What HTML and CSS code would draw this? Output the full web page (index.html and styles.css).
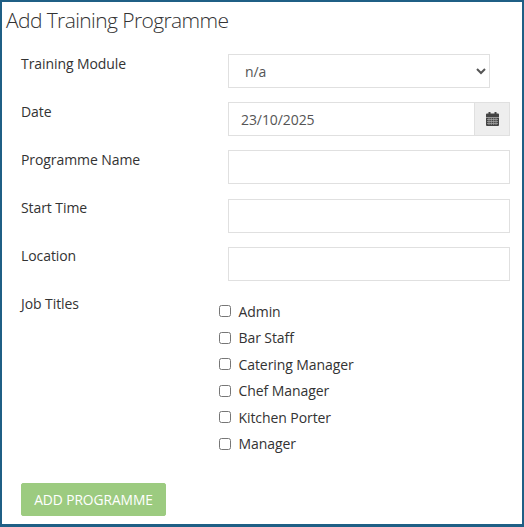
FILE: index.html
```html
<!DOCTYPE html>
<html lang="en">
    <head>
        <meta charset="UTF-8">
        <meta name="viewport" content="width=device-width, initial-scale=1.0">
        <title>Add Training Programme</title>
        <link rel="stylesheet" href="styles.css">
    </head>
    <body>
        <div class="panel">
            <h2 class="panel-title">Add Training Programme</h2>
            <form class="programme-form" name="programme">
                <div class="form-row">
                    <label class="row-label" for="module">Training Module</label>
                    <select class="form-control select-control" id="module">
                        <option>n/a</option>
                    </select>
                </div>
                <div class="form-row">
                    <label class="row-label" for="date">Date</label>
                    <div class="input-group">
                        <input class="form-control group-input" id="date" type="text" value="23/10/2025">
                        <span class="input-addon">
                            <svg class="calendar-icon" viewBox="0 0 13 14" width="13" height="14">
                                <path fill="#444" d="M2.5 0h2v1.5h4V0h2v1.5H12a1 1 0 0 1 1 1V5H0V2.500a1 1 0 0 1 1-1h1.500z"/>
                                <path fill="#444" d="M0 5.500h13V13a1 1 0 0 1-1 1H1a1 1 0 0 1-1-1z"/>
                                <path stroke="#aaa" stroke-width=".7" fill="none" d="M1 7.500h11M1 9.500h11M1 11.500h11M3 6v7M5.300 6v7M7.700 6v7M10 6v7"/>
                            </svg>
                        </span>
                    </div>
                </div>
                <div class="form-row">
                    <label class="row-label" for="name">Programme Name</label>
                    <input class="form-control" id="name" type="text">
                </div>
                <div class="form-row">
                    <label class="row-label" for="start">Start Time</label>
                    <input class="form-control" id="start" type="text">
                </div>
                <div class="form-row">
                    <label class="row-label" for="location">Location</label>
                    <input class="form-control" id="location" type="text">
                </div>
                <div class="form-row">
                    <span class="row-label titles-label">Job Titles</span>
                    <ul class="check-list">
                        <li><label><input type="checkbox">Admin</label></li>
                        <li><label><input type="checkbox">Bar Staff</label></li>
                        <li><label><input type="checkbox">Catering Manager</label></li>
                        <li><label><input type="checkbox">Chef Manager</label></li>
                        <li><label><input type="checkbox">Kitchen Porter</label></li>
                        <li><label><input type="checkbox">Manager</label></li>
                    </ul>
                </div>
                <button class="submit-button" type="submit">ADD PROGRAMME</button>
            </form>
        </div>
    </body>
</html>
```

FILE: styles.css
```css
* { box-sizing: border-box; }
html, body { margin: 0; padding: 0; height: 100%; }
body { font-family: "Open Sans", sans-serif; font-size: 14px; letter-spacing: -0.08px; color: #333; background: #fff; }
.panel { height: 527px; border: 2px solid #1f5f85; border-bottom-width: 3px; padding: 5px 12px 0 4px; }
.panel-title { margin: 0; font-size: 21px; line-height: 27px; letter-spacing: -0.6px; font-weight: 300; color: #333; }
.programme-form { margin-top: 20px; padding-left: 15px; }
.form-row { display: grid; grid-template-columns: 207px 282px; margin-bottom: 14.2px; }
.row-label { line-height: 20px; margin-top: -0.45px; }
.titles-label { margin-top: -1px; }
.form-control { width: 100%; height: 34px; border: 1px solid #e0e0e0; background: #fff; padding: 0 12px; font-family: inherit; font-size: 14px; letter-spacing: inherit; color: #555; border-radius: 0; outline: none; }
.select-control { width: 262px; padding: 0 12px; }
.input-group { display: flex; }
.group-input { flex: 1; min-width: 0; }
.input-addon { width: 35px; height: 34px; display: flex; align-items: center; justify-content: center; background: #eee; border: 1px solid #e0e0e0; border-left: 0; }
.check-list { list-style: none; margin: 0 0 0 -10px; padding: 3.4px 0 0; }
.check-list li { height: 26.5px; }
.check-list label { display: flex; align-items: center; height: 26px; }
.check-list input { width: 12px; height: 12px; margin: 0 8px 0 0.5px; }
.submit-button { display: block; width: 145px; height: 33px; margin-top: 25.3px; border: 1px solid #9ccb80; border-radius: 2px; background: #9ccb80; color: #fff; font-family: inherit; font-size: 13.8px; letter-spacing: inherit; }
```
